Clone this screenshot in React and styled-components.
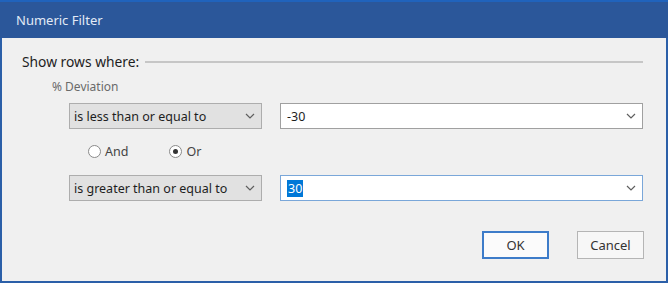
import React from 'react';
import styled, { createGlobalStyle } from 'styled-components';

const GlobalStyle = createGlobalStyle`
  html, body {
    margin: 0;
    padding: 0;
    background: #f0f0f0;
  }
  body {
    font-family: "Noto Sans", "Open Sans", sans-serif;
    font-size: 12px;
    color: #1e1e1e;
  }
`;

const Window = styled.div`
  width: 668px;
  height: 283px;
  box-sizing: border-box;
  display: flex;
  flex-direction: column;
  background: #f0f0f0;
  border: 2px solid #2b5fa8;
  border-top: none;
`;

const TitleBar = styled.div`
  height: 38px;
  flex: none;
  margin: 0 -2px;
  display: flex;
  align-items: center;
  padding-left: 16px;
  box-sizing: border-box;
  background: #2b579a;
  border-top: 2px solid #2063bc;
  color: #e2eaf6;
  font-size: 13px;
`;

const Body = styled.div`
  flex: 1;
  display: flex;
  flex-direction: column;
  padding: 16px 20px 0 20px;
`;

const GroupHeader = styled.div`
  display: flex;
  align-items: center;
  height: 16px;
  gap: 6px;
  line-height: 16px;
  font-size: 13.8px;
`;

const Rule = styled.div`
  flex: 1;
  height: 2px;
  margin-right: 3px;
  background: #c6c6c6;
`;

const FieldLabel = styled.div`
  margin: 9px 0 0 30px;
  height: 16px;
  line-height: 16px;
  color: #6a6a6a;
`;

const ConditionRow = styled.div`
  display: flex;
  gap: 18px;
  margin: ${(p) => p.top}px 0 0 47px;
`;

const Combo = styled.div`
  width: 193px;
  height: 26px;
  box-sizing: border-box;
  display: flex;
  align-items: center;
  justify-content: space-between;
  padding: 0 6px 0 4px;
  background: #e1e1e1;
  border: 1px solid #adadad;
  font-size: 12.5px;
`;

const ValueBox = styled.div`
  width: 363px;
  height: 26px;
  box-sizing: border-box;
  display: flex;
  align-items: center;
  justify-content: space-between;
  padding: 0 6px 0 6px;
  background: #ffffff;
  border: 1px solid ${(p) => (p.focused ? '#7aa7d9' : '#a0a0a0')};
  font-size: 12.5px;
`;

const Selected = styled.span`
  background: #0078d7;
  color: #ffffff;
  padding: 0 1px;
  line-height: 17px;
`;

const RadioRow = styled.div`
  display: flex;
  gap: 41px;
  margin: 13px 0 0 66px;
  height: 18px;
  align-items: center;
`;

const RadioItem = styled.label`
  display: flex;
  align-items: center;
  gap: 4px;
  color: #444;
  font-size: 12.5px;
`;

const RadioCircle = styled.span`
  width: 11px;
  height: 11px;
  border-radius: 50%;
  border: 1px solid #8a8a8a;
  background: #fff;
  display: flex;
  align-items: center;
  justify-content: center;
  &::after {
    content: '';
    width: 5px;
    height: 5px;
    border-radius: 50%;
    background: ${(p) => (p.checked ? '#333' : 'transparent')};
  }
`;

const ButtonBar = styled.div`
  display: flex;
  justify-content: flex-end;
  gap: 28px;
  margin: 30px 2px 0 0;
`;

const Button = styled.button`
  width: 67px;
  height: 28px;
  box-sizing: border-box;
  font-family: inherit;
  font-size: 13px;
  color: #333;
  background: ${(p) => (p.primary ? '#fbfbfb' : '#f7f7f7')};
  border: ${(p) => (p.primary ? '2px solid #3d7cc9' : '1px solid #b5b5b5')};
  padding: 0;
`;

const Chevron = () => (
  <svg width="10" height="6" viewBox="0 0 10 6">
    <path d="M1 1 L5 5 L9 1" fill="none" stroke="#5f5f5f" strokeWidth="1.2" />
  </svg>
);

export default function App() {
  return (
    <>
      <GlobalStyle />
      <Window>
        <TitleBar>Numeric Filter</TitleBar>
        <Body>
          <GroupHeader>
            <span>Show rows where:</span>
            <Rule />
          </GroupHeader>
          <FieldLabel>% Deviation</FieldLabel>
          <ConditionRow top={8}>
            <Combo>
              <span>is less than or equal to</span>
              <Chevron />
            </Combo>
            <ValueBox>
              <span>-30</span>
              <Chevron />
            </ValueBox>
          </ConditionRow>
          <RadioRow>
            <RadioItem>
              <RadioCircle />
              And
            </RadioItem>
            <RadioItem>
              <RadioCircle checked />
              Or
            </RadioItem>
          </RadioRow>
          <ConditionRow top={15}>
            <Combo>
              <span>is greater than or equal to</span>
              <Chevron />
            </Combo>
            <ValueBox focused>
              <Selected>30</Selected>
              <Chevron />
            </ValueBox>
          </ConditionRow>
          <ButtonBar>
            <Button primary>OK</Button>
            <Button>Cancel</Button>
          </ButtonBar>
        </Body>
      </Window>
    </>
  );
}
